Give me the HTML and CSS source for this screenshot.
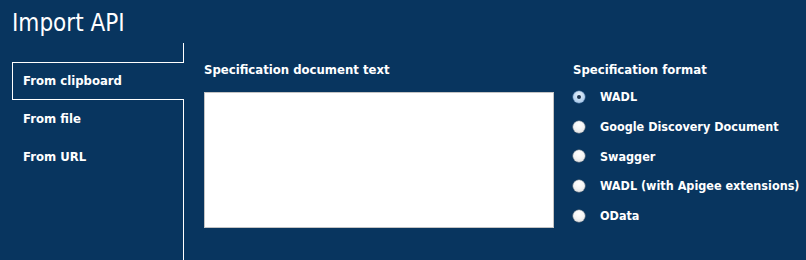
FILE: index.html
```html
<!DOCTYPE html>
<html>
<head>
<meta charset="utf-8">
<link rel="stylesheet" href="styles.css">
</head>
<body>
<div class="page">
  <h1 class="title">Import API</h1>
  <div class="main">
    <nav class="nav">
      <div class="nav-item active">From clipboard</div>
      <div class="nav-item">From file</div>
      <div class="nav-item">From URL</div>
    </nav>
    <section class="doc">
      <div class="label">Specification document text</div>
      <textarea class="doc-text"></textarea>
    </section>
    <section class="format">
      <div class="label">Specification format</div>
      <ul class="options">
        <li class="option"><span class="radio checked"></span>WADL</li>
        <li class="option"><span class="radio"></span>Google Discovery Document</li>
        <li class="option"><span class="radio"></span>Swagger</li>
        <li class="option"><span class="radio"></span>WADL (with Apigee extensions)</li>
        <li class="option"><span class="radio"></span>OData</li>
      </ul>
    </section>
  </div>
</div>
</body>
</html>
```
FILE: styles.css
```css
html, body {
  margin: 0;
  padding: 0;
  background: #08355f;
}
.page {
  width: 806px;
  height: 260px;
  overflow: hidden;
  background: #08355f;
  color: #ffffff;
  font-family: "DejaVu Sans Condensed", "DejaVu Sans", sans-serif;
}
.title {
  margin: 0;
  padding: 8px 0 0 12px;
  height: 43px;
  box-sizing: border-box;
  font-size: 24px;
  font-weight: normal;
  line-height: 30px;
}
.main {
  display: flex;
  align-items: flex-start;
}
.nav {
  margin-left: 12px;
  width: 172px;
  height: 217px;
  padding-top: 19px;
  box-sizing: border-box;
  border-right: 1px solid #ffffff;
}
.nav-item {
  height: 38px;
  box-sizing: border-box;
  padding-left: 11px;
  font-size: 13px;
  font-weight: bold;
  line-height: 38px;
}
.nav-item.active {
  border: 1px solid #ffffff;
  border-right: none;
  margin-right: -1px;
  background: #08355f;
  line-height: 36px;
  padding-left: 10px;
}
.label {
  font-size: 13px;
  font-weight: bold;
  line-height: 16px;
}
.doc {
  margin-left: 20px;
  padding-top: 19px;
}
.doc-text {
  display: block;
  margin: 14px 0 0 0;
  width: 350px;
  height: 136px;
  box-sizing: border-box;
  border: 1px solid #c4c4c4;
  background: #ffffff;
  resize: none;
  padding: 0;
}
.format {
  margin-left: 19px;
  padding-top: 19px;
}
.options {
  list-style: none;
  margin: 4px 0 0 0;
  padding: 0;
}
.option {
  display: flex;
  align-items: center;
  height: 29.7px;
  font-size: 12.5px;
  font-weight: bold;
  white-space: nowrap;
}
.radio {
  flex: none;
  width: 12px;
  height: 12px;
  border-radius: 50%;
  margin: 0 15px 0 0;
  background: radial-gradient(circle at 50% 30%, #ffffff 0%, #f4f4f4 50%, #d6d6d6 100%);
  box-shadow: 0 0 0 0.5px #9a9a9a;
  position: relative;
}
.radio.checked {
  background: radial-gradient(circle at 50% 35%, #e6f1fb 0%, #b7d3ef 60%, #8fb6e0 100%);
  box-shadow: 0 0 0 0.5px #5f86b3;
}
.radio.checked::after {
  content: "";
  position: absolute;
  left: 4px;
  top: 4px;
  width: 4px;
  height: 4px;
  border-radius: 50%;
  background: #1d3550;
}
```
